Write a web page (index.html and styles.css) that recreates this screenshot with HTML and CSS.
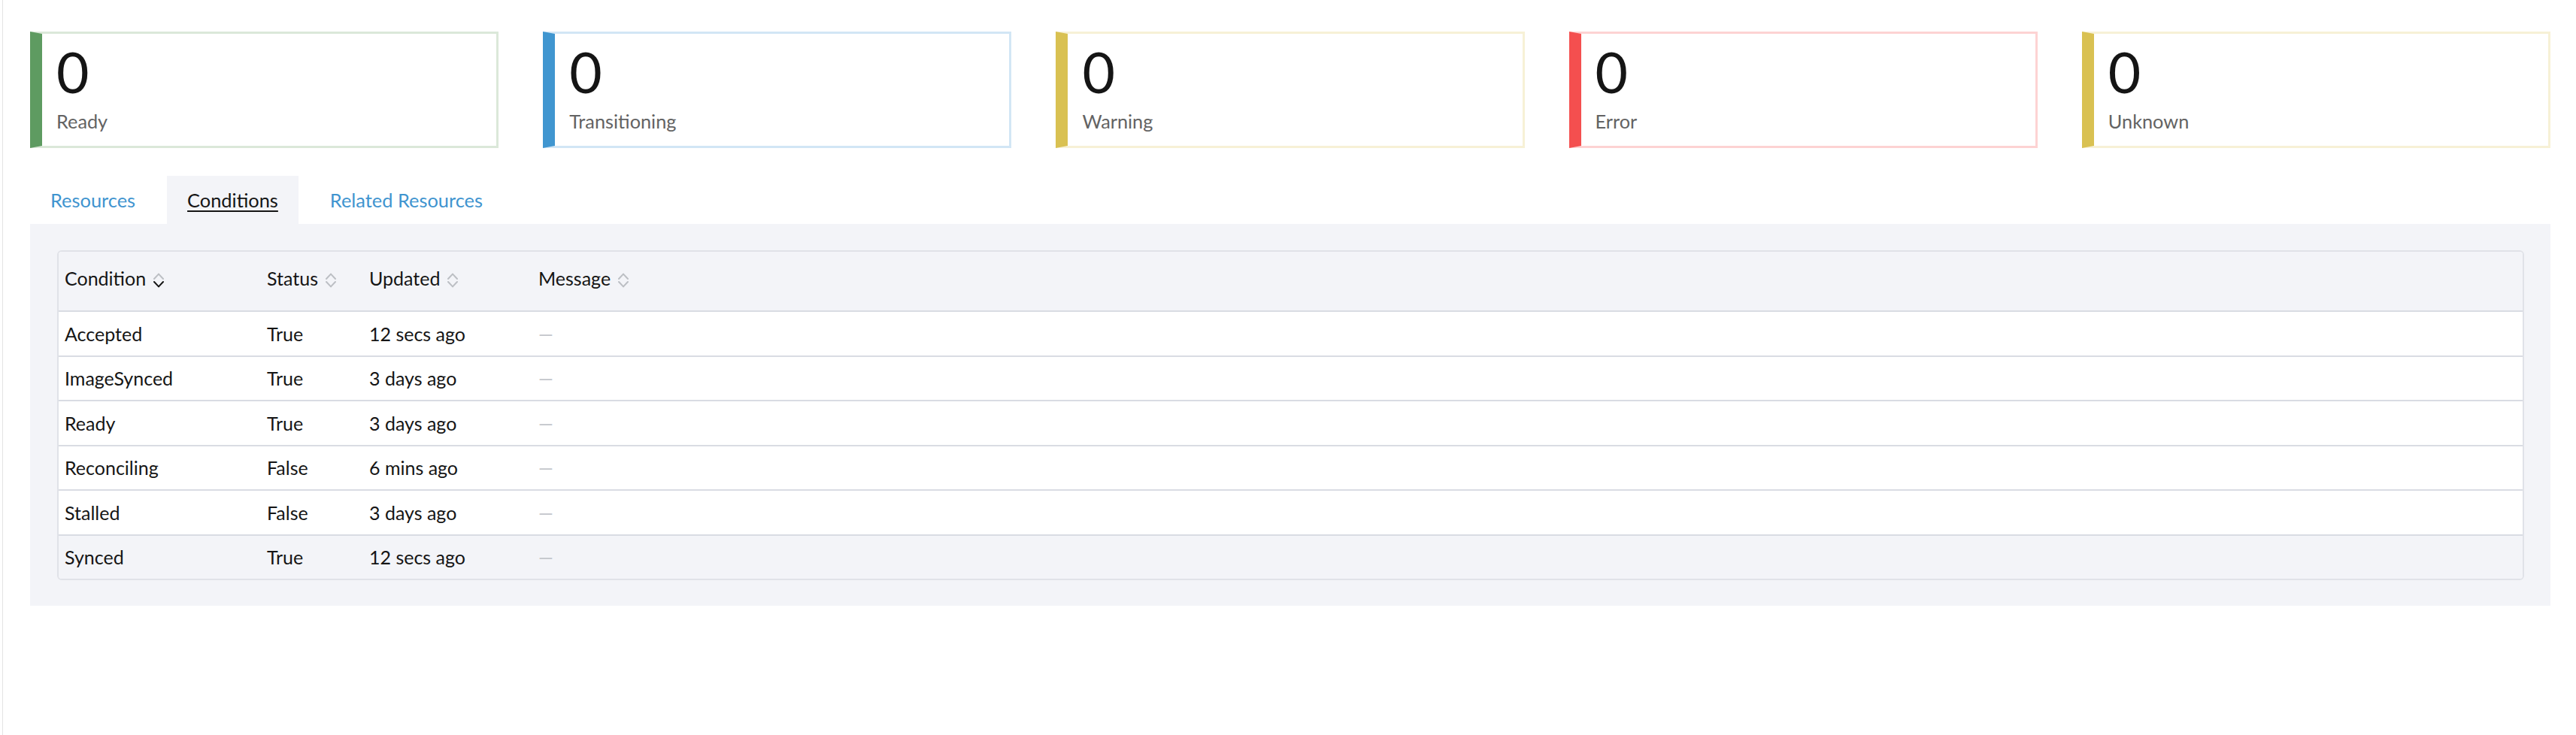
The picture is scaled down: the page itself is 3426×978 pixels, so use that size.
FILE: index.html
```html
<!DOCTYPE html>
<html lang="en">
<head>
<meta charset="utf-8">
<title>Conditions</title>
<link rel="stylesheet" href="styles.css">
</head>
<body>
<div class="page">
  <div class="cards">
    <div class="card card-ready"><div class="count">0</div><div class="label">Ready</div></div>
    <div class="card card-transitioning"><div class="count">0</div><div class="label">Transitioning</div></div>
    <div class="card card-warning"><div class="count">0</div><div class="label">Warning</div></div>
    <div class="card card-error"><div class="count">0</div><div class="label">Error</div></div>
    <div class="card card-unknown"><div class="count">0</div><div class="label">Unknown</div></div>
  </div>

  <div class="tabs">
    <div class="tab">Resources</div>
    <div class="tab tab-active"><span class="tab-text">Conditions</span></div>
    <div class="tab">Related Resources</div>
  </div>

  <div class="panel">
    <div class="table-wrap">
      <table class="conditions">
        <colgroup>
          <col class="c1"><col class="c2"><col class="c3"><col>
        </colgroup>
        <thead>
          <tr>
            <th><span class="th-inner">Condition <svg class="sort" viewBox="0 0 14 20" width="14" height="20"><polyline class="up" points="1,8 7,1.6 13,8"/><polyline class="down active" points="1,12 7,18.4 13,12"/></svg></span></th>
            <th><span class="th-inner">Status <svg class="sort" viewBox="0 0 14 20" width="14" height="20"><polyline class="up" points="1,8 7,1.6 13,8"/><polyline class="down" points="1,12 7,18.4 13,12"/></svg></span></th>
            <th><span class="th-inner">Updated <svg class="sort" viewBox="0 0 14 20" width="14" height="20"><polyline class="up" points="1,8 7,1.6 13,8"/><polyline class="down" points="1,12 7,18.4 13,12"/></svg></span></th>
            <th><span class="th-inner">Message <svg class="sort" viewBox="0 0 14 20" width="14" height="20"><polyline class="up" points="1,8 7,1.6 13,8"/><polyline class="down" points="1,12 7,18.4 13,12"/></svg></span></th>
          </tr>
        </thead>
        <tbody>
          <tr><td>Accepted</td><td>True</td><td>12 secs ago</td><td class="dash">—</td></tr>
          <tr><td>ImageSynced</td><td>True</td><td>3 days ago</td><td class="dash">—</td></tr>
          <tr><td>Ready</td><td>True</td><td>3 days ago</td><td class="dash">—</td></tr>
          <tr><td>Reconciling</td><td>False</td><td>6 mins ago</td><td class="dash">—</td></tr>
          <tr><td>Stalled</td><td>False</td><td>3 days ago</td><td class="dash">—</td></tr>
          <tr class="row-hover"><td>Synced</td><td>True</td><td>12 secs ago</td><td class="dash">—</td></tr>
        </tbody>
      </table>
    </div>
  </div>
</div>
</body>
</html>
```

FILE: styles.css
```css
* { box-sizing: border-box; }

html, body {
  margin: 0;
  padding: 0;
  background: #ffffff;
}

body {
  font-family: Lato, "Open Sans", "Liberation Sans", sans-serif;
  color: #151515;
}

.page {
  margin-left: 3px;
  border-left: 1px solid #e3e3e3;
  min-height: 978px;
  padding: 42px 34px 0 36px;
}

/* status cards */
.cards {
  display: grid;
  grid-template-columns: repeat(5, 1fr);
  gap: 59px;
}

.card {
  border: 3px solid #dbe8d9;
  border-left: 16px solid #5e9b61;
  padding: 10px 19px 18px;
  background: #ffffff;
}

.card-transitioning { border-color: #d2e6f5; border-left-color: #4096d0; }
.card-warning { border-color: #f7f1d6; border-left-color: #d9c152; }
.card-error { border-color: #fdd3d3; border-left-color: #f44f4f; }
.card-unknown { border-color: #f7f1d6; border-left-color: #d9c152; }

.count {
  font-size: 75px;
  line-height: 80px;
  color: #151515;
}

.label {
  margin-top: 11px;
  font-size: 25.3px;
  line-height: 30px;
  color: #636363;
}

/* tabs */
.tabs {
  display: flex;
  gap: 15px;
  margin-top: 37px;
}

.tab {
  padding: 0 27px;
  font-size: 25.4px;
  line-height: 64px;
  color: #3f94cf;
}

.tab-active {
  background: #f3f4f8;
  color: #151515;
}

.tab-text {
  text-decoration: underline;
  text-decoration-thickness: 2px;
  text-underline-offset: 4px;
}

/* panel + table */
.panel {
  background: #f3f4f8;
  padding: 35px 35px 34px 36px;
}

.table-wrap {
  border: 2px solid #e0e2e8;
  border-radius: 6px;
  overflow: hidden;
  background: #ffffff;
}

.conditions {
  width: 100%;
  border-collapse: separate;
  border-spacing: 0;
  table-layout: fixed;
  font-size: 25px;
  line-height: 30px;
}

.c1 { width: 269px; }
.c2 { width: 136px; }
.c3 { width: 225px; }

.conditions th {
  background: #f3f4f8;
  font-weight: 400;
  text-align: left;
  height: 80px;
  padding: 0 8px 8px;
  border-bottom: 2px solid #d9dce3;
  vertical-align: middle;
}

.th-inner {
  display: inline-flex;
  align-items: center;
  gap: 10px;
  white-space: nowrap;
}

.sort {
  display: block;
  margin-top: 5px;
  fill: none;
  stroke-width: 2;
  stroke-linecap: round;
  stroke-linejoin: round;
}

.sort polyline { stroke: #bcbfc4; }
.sort polyline.active { stroke: #151515; }

.conditions td {
  height: 59.5px;
  padding: 0 8px;
  border-bottom: 2px solid #d9dce3;
  vertical-align: middle;
  white-space: nowrap;
}

.conditions tr:last-child td { border-bottom: none; height: 57.5px; }

.row-hover td { background: #f3f4f8; }

.dash {
  color: #c3c6cb;
}
```
